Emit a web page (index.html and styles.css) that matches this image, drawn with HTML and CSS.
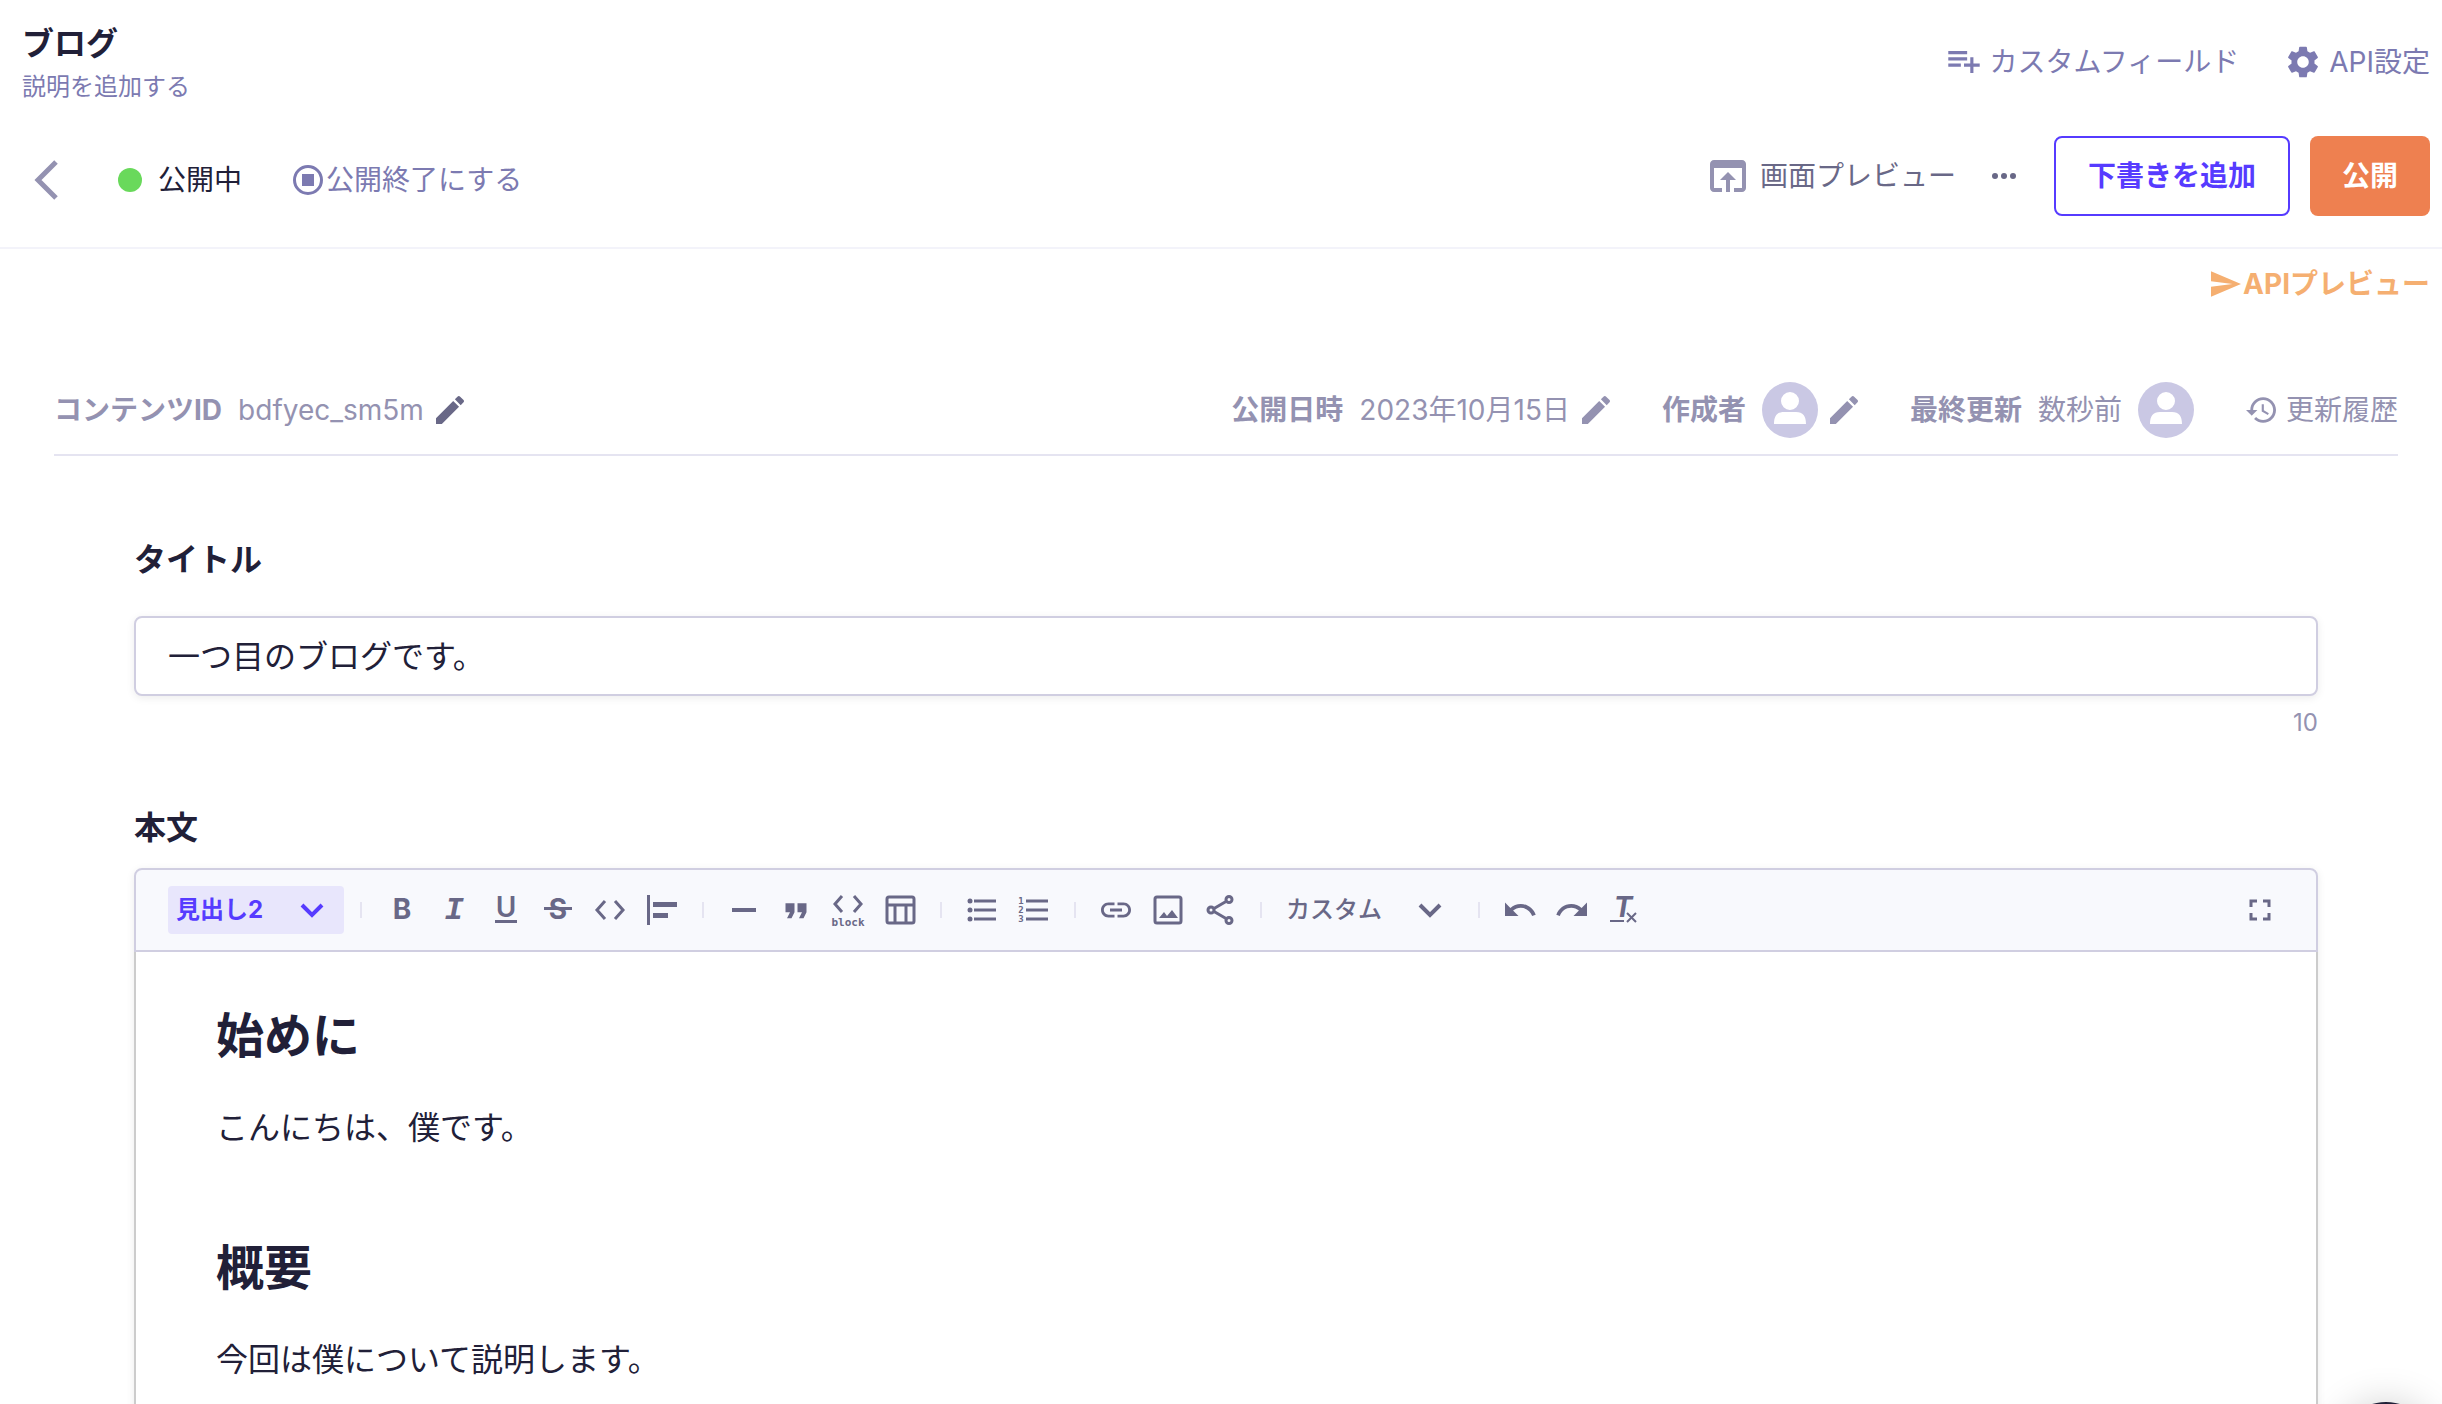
FILE: index.html
```html
<!DOCTYPE html>
<html lang="ja">
<head>
    <meta charset="UTF-8">
    <meta name="viewport" content="width=device-width, initial-scale=1.0">
    <title>ブログ</title>
    <link rel="stylesheet" href="styles.css">
</head>
<body>
<header class="header">
    <div class="header-top">
        <div class="api-info">
            <h1>ブログ</h1>
            <a href="#" class="description">説明を追加する</a>
        </div>
        <nav class="header-links">
            <a href="#">
                <svg width="32" height="22" viewBox="2 6 20 14"><path d="M14 10H2v2h12v-2zm0-4H2v2h12V6zm4 8v-4h-2v4h-4v2h4v4h2v-4h4v-2h-4zM2 16h8v-2H2v2z"/></svg>
                カスタムフィールド
            </a>
            <a href="#">
                <svg width="32" height="32" viewBox="2 2 20 20"><path d="M19.14 12.94c.04-.3.06-.61.06-.94 0-.32-.02-.64-.07-.94l2.03-1.58c.18-.14.23-.41.12-.61l-1.92-3.32c-.12-.22-.37-.29-.59-.22l-2.39.96c-.5-.38-1.03-.7-1.62-.94l-.36-2.54c-.04-.24-.24-.41-.48-.41h-3.84c-.24 0-.43.17-.47.41l-.36 2.54c-.59.24-1.13.57-1.62.94l-2.39-.96c-.22-.08-.47 0-.59.22L2.74 8.87c-.12.21-.08.47.12.61l2.03 1.58c-.05.3-.09.63-.09.94s.02.64.07.94l-2.03 1.58c-.18.14-.23.41-.12.61l1.92 3.32c.12.22.37.29.59.22l2.39-.96c.5.38 1.03.7 1.62.94l.36 2.54c.05.24.24.41.48.41h3.84c.24 0 .44-.17.47-.41l.36-2.54c.59-.24 1.13-.56 1.62-.94l2.39.96c.22.08.47 0 .59-.22l1.92-3.32c.12-.22.07-.47-.12-.61l-2.01-1.58zM12 15.6c-1.98 0-3.6-1.62-3.6-3.6s1.62-3.6 3.6-3.6 3.6 1.62 3.6 3.6-1.62 3.6-3.6 3.6z"/></svg>
                API設定
            </a>
        </nav>
    </div>

    <div class="header-bottom">
        <div class="status">
            <button class="back" aria-label="戻る">
                <svg width="24" height="40" viewBox="0 0 24 40"><path d="M22 2L4 20l18 18" fill="none" stroke="currentColor" stroke-width="5"/></svg>
            </button>
            <span class="status-label"><span class="dot"></span>公開中</span>
            <button class="stop">
                <svg width="32" height="32" viewBox="0 0 32 32"><circle cx="16" cy="16" r="13.5" fill="none" stroke="currentColor" stroke-width="3"/><path d="M10 10h12v12H10z"/></svg>
                公開終了にする
            </button>
        </div>
        <div class="actions">
            <button class="preview">
                <svg width="36" height="32" viewBox="3 4 18 16"><path d="M19 4H5c-1.11 0-2 .9-2 2v12c0 1.1.89 2 2 2h4v-2H5V8h14v10h-4v2h4c1.1 0 2-.9 2-2V6c0-1.1-.89-2-2-2zm-7 6l-4 4h3v6h2v-6h3l-4-4z"/></svg>
                画面プレビュー
            </button>
            <button class="more" aria-label="その他">
                <svg width="24" height="6" viewBox="0 0 24 6"><circle cx="3" cy="3" r="3"/><circle cx="12" cy="3" r="3"/><circle cx="21" cy="3" r="3"/></svg>
            </button>
            <button class="btn btn-outline">下書きを追加</button>
            <button class="btn btn-primary">公開</button>
        </div>
    </div>
</header>

<main>
    <div class="api-preview">
        <a href="#">
            <svg width="30" height="26" viewBox="2 3 21 18"><path d="M2.01 21L23 12 2.01 3 2 10l15 2-15 2z"/></svg>
            APIプレビュー
        </a>
    </div>

    <div class="meta">
        <div class="meta-item">
            <b>コンテンツID</b>
            <span>bdfyec_sm5m</span>
            <button class="edit edit-dark" aria-label="コンテンツIDを編集">
                <svg width="28" height="28" viewBox="3 3 18 18"><path d="M3 17.25V21h3.75L17.81 9.94l-3.75-3.75L3 17.25zM20.71 7.04c.39-.39.39-1.02 0-1.41l-2.34-2.34c-.39-.39-1.02-.39-1.41 0l-1.83 1.83 3.75 3.75 1.83-1.83z"/></svg>
            </button>
        </div>
        <div class="meta-right">
            <div class="meta-item">
                <b>公開日時</b>
                <span>2023年10月15日</span>
                <button class="edit" aria-label="公開日時を編集">
                    <svg width="28" height="28" viewBox="3 3 18 18"><path d="M3 17.25V21h3.75L17.81 9.94l-3.75-3.75L3 17.25zM20.71 7.04c.39-.39.39-1.02 0-1.41l-2.34-2.34c-.39-.39-1.02-.39-1.41 0l-1.83 1.83 3.75 3.75 1.83-1.83z"/></svg>
                </button>
            </div>
            <div class="meta-item">
                <b>作成者</b>
                <svg class="avatar" viewBox="0 0 56 56"><circle cx="28" cy="28" r="28"/><path fill="#fff" d="M28 10a9 9 0 1 1 0 18 9 9 0 0 1 0-18zM12 42c0-8 3-12 10-12h12c7 0 10 4 10 12z"/></svg>
                <button class="edit" aria-label="作成者を編集">
                    <svg width="28" height="28" viewBox="3 3 18 18"><path d="M3 17.25V21h3.75L17.81 9.94l-3.75-3.75L3 17.25zM20.71 7.04c.39-.39.39-1.02 0-1.41l-2.34-2.34c-.39-.39-1.02-.39-1.41 0l-1.83 1.83 3.75 3.75 1.83-1.83z"/></svg>
                </button>
            </div>
            <div class="meta-item">
                <b>最終更新</b>
                <span>数秒前</span>
                <svg class="avatar" viewBox="0 0 56 56"><circle cx="28" cy="28" r="28"/><path fill="#fff" d="M28 10a9 9 0 1 1 0 18 9 9 0 0 1 0-18zM12 42c0-8 3-12 10-12h12c7 0 10 4 10 12z"/></svg>
            </div>
            <a href="#" class="history">
                <svg width="30" height="28" viewBox="1 3 21 18"><path d="M13 3c-4.97 0-9 4.03-9 9H1l3.89 3.89.07.14L9 12H6c0-3.87 3.13-7 7-7s7 3.13 7 7-3.13 7-7 7c-1.93 0-3.68-.79-4.94-2.06l-1.42 1.42C8.27 19.99 10.51 21 13 21c4.97 0 9-4.03 9-9s-4.03-9-9-9zm-1 5v5l4.28 2.54.72-1.21-3.5-2.08V8H12z"/></svg>
                更新履歴
            </a>
        </div>
    </div>

    <form class="fields">
        <div class="field">
            <label class="field-label" for="title">タイトル</label>
            <input type="text" id="title" class="text-input" value="一つ目のブログです。">
            <p class="counter">10</p>
        </div>

        <div class="field field-body">
            <h2 class="field-label" id="body-label">本文</h2>
            <div class="editor">
                <div class="toolbar">
                    <div class="select select-heading">
                        <select aria-label="見出し">
                            <option>見出し2</option>
                        </select>
                        <svg width="24" height="16" viewBox="0 0 24 16"><path d="M2 2l10 10L22 2"/></svg>
                    </div>
                    <span class="separator"></span>
                    <button type="button" class="tool" aria-label="太字">
                        <svg viewBox="0 0 36 36"><text x="18" y="27" class="glyph">B</text></svg>
                    </button>
                    <button type="button" class="tool" aria-label="斜体">
                        <svg viewBox="0 0 36 36"><text x="18" y="27" class="glyph glyph-italic">I</text></svg>
                    </button>
                    <button type="button" class="tool" aria-label="下線">
                        <svg viewBox="0 0 36 36"><text x="18" y="25" class="glyph glyph-medium">U</text><path d="M7 28h22v3H7z"/></svg>
                    </button>
                    <button type="button" class="tool" aria-label="取り消し線">
                        <svg viewBox="0 0 36 36"><text x="18" y="27" class="glyph">S</text><path d="M4 15h28v3H4z"/></svg>
                    </button>
                    <button type="button" class="tool" aria-label="コード">
                        <svg viewBox="0 0 36 36"><path class="line" d="M13 9l-8 9 8 9M23 9l8 9-8 9"/></svg>
                    </button>
                    <button type="button" class="tool" aria-label="配置">
                        <svg viewBox="0 0 36 36"><path d="M3 3h3v30H3zM9 10h24v5H9zM9 21h15v5H9z"/></svg>
                    </button>
                    <span class="separator"></span>
                    <button type="button" class="tool" aria-label="水平線">
                        <svg viewBox="0 0 36 36"><path d="M6 16h24v4H6z"/></svg>
                    </button>
                    <button type="button" class="tool" aria-label="引用">
                        <svg viewBox="0 0 24 24"><path d="M6 17.5h3l2-4V7.5H5v6h3zm8 0h3l2-4V7.5h-6v6h3z"/></svg>
                    </button>
                    <button type="button" class="tool" aria-label="コードブロック">
                        <svg viewBox="0 0 36 36"><path class="line" d="M12 4l-7 8 7 8M24 4l7 8-7 8"/><text x="18" y="34" class="glyph-block">block</text></svg>
                    </button>
                    <button type="button" class="tool" aria-label="表">
                        <svg viewBox="0 0 36 36"><path class="line" d="M7 5h23a2 2 0 0 1 2 2v22a2 2 0 0 1-2 2H7a2 2 0 0 1-2-2V7a2 2 0 0 1 2-2zM5 13h27M13 13v18M24 13v18"/></svg>
                    </button>
                    <span class="separator"></span>
                    <button type="button" class="tool" aria-label="箇条書き">
                        <svg viewBox="0 0 36 36"><circle cx="6" cy="9" r="2.5"/><circle cx="6" cy="18" r="2.5"/><circle cx="6" cy="27" r="2.5"/><path class="line" d="M10 9h22M10 18h22M10 27h22"/></svg>
                    </button>
                    <button type="button" class="tool" aria-label="番号付きリスト">
                        <svg viewBox="0 0 36 36"><text x="5" y="12" class="glyph-num">1</text><text x="5" y="21" class="glyph-num">2</text><text x="5" y="30" class="glyph-num">3</text><path class="line" d="M10 9h22M10 18h22M10 27h22"/></svg>
                    </button>
                    <span class="separator"></span>
                    <button type="button" class="tool" aria-label="リンク">
                        <svg viewBox="0 0 24 24"><path d="M3.9 12c0-1.71 1.39-3.1 3.1-3.1h4V7H7c-2.76 0-5 2.24-5 5s2.24 5 5 5h4v-1.9H7c-1.71 0-3.1-1.39-3.1-3.1zM8 13h8v-2H8v2zm9-6h-4v1.9h4c1.71 0 3.1 1.39 3.1 3.1s-1.39 3.1-3.1 3.1h-4V17h4c2.76 0 5-2.24 5-5s-2.24-5-5-5z"/></svg>
                    </button>
                    <button type="button" class="tool" aria-label="画像">
                        <svg viewBox="0 0 36 36"><path class="line" d="M7 5h22a2 2 0 0 1 2 2v22a2 2 0 0 1-2 2H7a2 2 0 0 1-2-2V7a2 2 0 0 1 2-2z"/><path d="M9 26l5-6 3 4 5-6 6 8z"/></svg>
                    </button>
                    <button type="button" class="tool" aria-label="埋め込み">
                        <svg viewBox="0 0 36 36"><path class="line" d="M12 16.5l12-7M12 19.5l12 7"/><g class="line"><circle cx="9" cy="18" r="3"/><circle cx="27" cy="7.5" r="3"/><circle cx="27" cy="28.5" r="3"/></g></svg>
                    </button>
                    <span class="separator"></span>
                    <div class="select select-custom">
                        <select aria-label="カスタムクラス">
                            <option>カスタム</option>
                        </select>
                        <svg width="24" height="16" viewBox="0 0 24 16"><path d="M2 2l10 10L22 2"/></svg>
                    </div>
                    <span class="separator"></span>
                    <button type="button" class="tool" aria-label="元に戻す">
                        <svg viewBox="0 0 24 24"><path d="M12.5 8c-2.65 0-5.05.99-6.9 2.6L2 7v9h9l-3.62-3.62c1.39-1.16 3.16-1.88 5.12-1.88 3.54 0 6.55 2.31 7.6 5.5l2.37-.78C21.08 11.03 17.15 8 12.5 8z"/></svg>
                    </button>
                    <button type="button" class="tool" aria-label="やり直す">
                        <svg viewBox="0 0 24 24"><path d="M18.4 10.6C16.55 8.99 14.15 8 11.5 8c-4.65 0-8.58 3.03-9.96 7.22L3.9 16c1.05-3.19 4.05-5.5 7.6-5.5 1.95 0 3.73.72 5.12 1.88L13 16h9V7l-3.6 3.6z"/></svg>
                    </button>
                    <button type="button" class="tool" aria-label="書式をクリア">
                        <svg viewBox="0 0 36 36"><text x="17" y="25" class="glyph glyph-clear">T</text><path d="M4 28h14v2H4z"/><path class="line line-thin" d="M21 21l9 9M30 21l-9 9"/></svg>
                    </button>
                    <button type="button" class="tool tool-fullscreen" aria-label="全画面">
                        <svg viewBox="0 0 24 24"><path d="M7 14H5v5h5v-2H7v-3zm-2-4h2V7h3V5H5v5zm12 7h-3v2h5v-5h-2v3zM14 5v2h3v3h2V5h-5z"/></svg>
                    </button>
                </div>
                <div class="editor-content" contenteditable="true" role="textbox" aria-labelledby="body-label" spellcheck="false">
                    <h2>始めに</h2>
                    <p>こんにちは、僕です。</p>
                    <h2>概要</h2>
                    <p>今回は僕について説明します。</p>
                </div>
            </div>
        </div>
    </form>
</main>

<button class="help" aria-label="ヘルプ"></button>
</body>
</html>
```

FILE: styles.css
```css
* {
    margin: 0;
    padding: 0;
    box-sizing: border-box;
}

body {
    display: flex;
    flex-direction: column;
    height: 100vh;
    overflow: hidden;
    font-family: Inter, "Noto Sans CJK JP", sans-serif;
    font-size: 28px;
    line-height: 40px;
    color: #212038;
    background: #fff;
}

a {
    color: inherit;
    text-decoration: none;
}

button,
input,
select {
    font: inherit;
    color: inherit;
    border: none;
    background: none;
}

button {
    display: flex;
    align-items: center;
    justify-content: center;
    cursor: pointer;
    white-space: nowrap;
}

svg {
    flex: none;
    fill: currentColor;
}

/* ヘッダー */
.header {
    padding: 22px 12px 23px 22px;
    border-bottom: 2px solid #f3f3fa;
}

.header-top,
.header-bottom {
    display: flex;
    justify-content: space-between;
    align-items: flex-start;
}

.header-top {
    margin-bottom: 28px;
}

.header h1 {
    font-size: 32px;
    line-height: 44px;
}

.description {
    display: block;
    font-size: 24px;
    line-height: 42px;
    color: #7c7ab1;
}

.header-links {
    display: flex;
    gap: 48px;
    color: #7c7ab1;
}

.header-links a {
    display: flex;
    align-items: center;
    gap: 10px;
    height: 80px;
}

.status {
    display: flex;
    align-items: center;
    height: 88px;
}

.back {
    width: 48px;
    height: 48px;
    margin-right: 48px;
    color: #9492b1;
}

.status-label {
    display: flex;
    align-items: center;
    gap: 16px;
    margin-right: 50px;
}

.dot {
    width: 24px;
    height: 24px;
    border-radius: 50%;
    background: #69d95b;
}

.stop {
    gap: 2px;
    color: #7c7ab1;
}

.actions {
    display: flex;
    align-items: center;
}

.preview {
    gap: 14px;
    color: #696887;
}

.preview svg {
    color: #9492b1;
}

.more {
    height: 48px;
    margin: 0 38px 0 36px;
    color: #696887;
}

.btn {
    height: 80px;
    padding: 0 32px;
    border-radius: 8px;
    font-weight: 700;
}

.btn-outline {
    margin-right: 20px;
    border: 2px solid #563bff;
    color: #563bff;
}

.btn-primary {
    background: #ee8050;
    color: #fff;
}

/* APIプレビュー */
.api-preview {
    display: flex;
    justify-content: flex-end;
    padding: 15px 12px;
    color: #f5af71;
    font-weight: 700;
}

.api-preview a {
    display: flex;
    align-items: center;
    gap: 2px;
}

/* コンテンツ情報 */
.meta {
    display: flex;
    justify-content: space-between;
    margin: 63px 44px 0 54px;
    padding-bottom: 16px;
    border-bottom: 2px solid #e5e4f1;
    color: #9492b1;
}

.meta-right {
    display: flex;
    gap: 52px;
}

.meta-item {
    display: flex;
    align-items: center;
    gap: 16px;
}

.edit {
    width: 28px;
    height: 28px;
    margin-left: -4px;
}

.edit-dark {
    color: #696887;
}

.avatar {
    width: 56px;
    height: 56px;
    fill: #cac8e4;
}

.history {
    display: flex;
    align-items: center;
    gap: 10px;
}

/* 入力欄 */
.fields {
    padding: 80px 124px 0 134px;
}

.field-label {
    display: block;
    font-size: 32px;
    font-weight: 700;
    line-height: 48px;
}

.text-input {
    display: block;
    width: 100%;
    height: 80px;
    margin-top: 32px;
    padding: 0 32px 4px;
    border: 2px solid #d0cee1;
    border-radius: 8px;
    font-size: 32px;
    background: #fff;
    box-shadow: 0 2px 8px rgba(0, 0, 0, 0.08);
}

.counter {
    margin-top: 12px;
    font-size: 24px;
    line-height: 30px;
    text-align: right;
    color: #9492b1;
}

.field-body {
    margin-top: 66px;
}

/* エディタ */
.editor {
    margin-top: 16px;
    border-radius: 8px;
    box-shadow: 0 2px 8px rgba(0, 0, 0, 0.08);
}

.toolbar {
    display: flex;
    align-items: center;
    height: 84px;
    padding: 0 30px 0 32px;
    border: 2px solid #d0cee1;
    border-radius: 8px 8px 0 0;
    background: #f8f9fd;
    color: #696887;
}

.select {
    position: relative;
    height: 48px;
}

.select select {
    width: 100%;
    height: 100%;
    font-size: 24px;
    appearance: none;
}

.select svg {
    position: absolute;
    top: 17px;
    right: 20px;
    fill: none;
    stroke: currentColor;
    stroke-width: 4;
    pointer-events: none;
}

.select-heading {
    width: 176px;
    margin-right: 2px;
    border-radius: 4px;
    background: #e8e6fc;
    color: #563bff;
    font-weight: 700;
}

.select-heading select {
    padding-left: 8px;
}

.select-custom {
    width: 188px;
    font-weight: 500;
}

.select-custom select {
    padding-left: 10px;
}

.select-custom svg {
    right: 22px;
}

.separator {
    width: 2px;
    height: 16px;
    margin: 0 14px;
    background: #e5e4f1;
}

.tool {
    width: 52px;
    height: 52px;
}

.tool svg {
    width: 36px;
    height: 36px;
    overflow: visible;
}

.tool-fullscreen {
    margin-left: auto;
}

.line {
    fill: none;
    stroke: currentColor;
    stroke-width: 3;
}

.line-thin {
    stroke-width: 2;
}

.glyph {
    font-size: 28px;
    font-weight: 700;
    text-anchor: middle;
}

.glyph-medium {
    font-weight: 600;
}

.glyph-italic {
    font-family: "Liberation Mono", monospace;
    font-size: 32px;
    font-style: italic;
}

.glyph-clear {
    font-style: italic;
}

.glyph-block {
    font-family: "DejaVu Sans Mono", monospace;
    font-size: 11px;
    font-weight: 700;
    text-anchor: middle;
}

.glyph-num {
    font-family: "DejaVu Sans Mono", monospace;
    font-size: 9px;
    font-weight: 700;
    text-anchor: middle;
}

.editor-content {
    min-height: 480px;
    padding: 52px 80px;
    border: solid #ccc;
    border-width: 0 2px 2px;
    font-size: 32px;
    line-height: 48px;
    outline: none;
}

.editor-content h2 {
    font-size: 48px;
    line-height: 64px;
    margin-bottom: 36px;
}

.editor-content p {
    margin-bottom: 84px;
}

/* 右下のヘルプボタン */
.help {
    position: fixed;
    right: 8px;
    bottom: -94px;
    width: 96px;
    height: 96px;
    border-radius: 50%;
    background: #212038;
    box-shadow: 0 2px 40px rgba(0, 0, 0, 0.2);
}
```
